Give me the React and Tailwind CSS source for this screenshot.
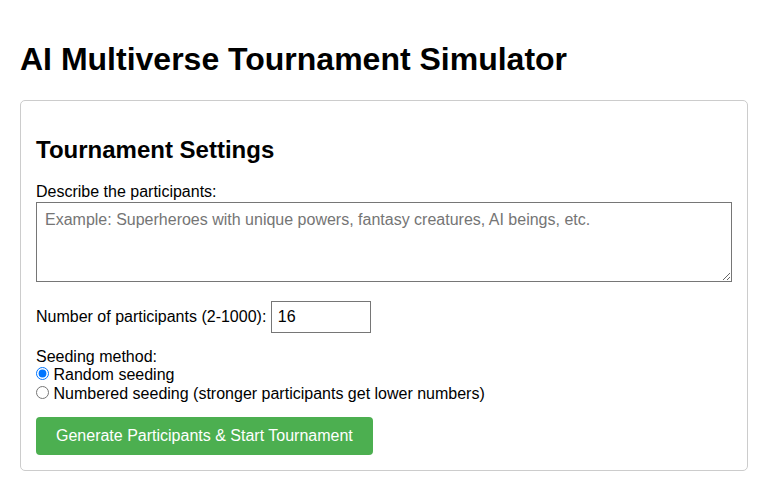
import React, { useState } from 'react';

const App = () => {
  const [description, setDescription] = useState('');
  const [count, setCount] = useState('16');
  const [seeding, setSeeding] = useState('random');

  return (
    <div className="min-h-screen bg-white p-5 text-black font-['Liberation_Sans',Arial,sans-serif] text-[16px] leading-[1.15]">
      <h1 className="mt-[21.44px] mb-[21.44px] text-[32px] font-bold leading-[1.15]">
        AI Multiverse Tournament Simulator
      </h1>

      {/* settings card */}
      <div className="border border-[#cccccc] rounded-[5px] p-[15px]">
        <h2 className="mt-[19.92px] mb-[19.92px] text-[24px] font-bold leading-[1.15]">
          Tournament Settings
        </h2>

        <div className="mb-[14px]">
          <label className="block">Describe the participants:</label>
          <textarea
            value={description}
            onChange={(e) => setDescription(e.target.value)}
            placeholder="Example: Superheroes with unique powers, fantasy creatures, AI beings, etc."
            className="mt-px w-full h-[80px] align-baseline border border-[#767676] p-2 placeholder:text-[#757575] outline-none"
          />
        </div>

        <div className="mb-[15px]">
          <label>Number of participants (2-1000): </label>
          <input
            type="number"
            min={2}
            max={1000}
            value={count}
            onChange={(e) => setCount(e.target.value)}
            className="w-[100px] h-[32px] border border-[#767676] px-[6px] py-[6px] align-baseline outline-none"
          />
        </div>

        <div className="mb-[14px]">
          <label className="block">Seeding method:</label>
          <label className="block">
            <input
              type="radio"
              name="seeding"
              checked={seeding === 'random'}
              onChange={() => setSeeding('random')}
            />{' '}
            Random seeding
          </label>
          <label className="block">
            <input
              type="radio"
              name="seeding"
              checked={seeding === 'numbered'}
              onChange={() => setSeeding('numbered')}
            />{' '}
            Numbered seeding (stronger participants get lower numbers)
          </label>
        </div>

        <button className="bg-[#4caf50] text-white px-5 py-[10px] rounded-[4px] leading-[1.15]">
          Generate Participants &amp; Start Tournament
        </button>
      </div>
    </div>
  );
};

export default App;
